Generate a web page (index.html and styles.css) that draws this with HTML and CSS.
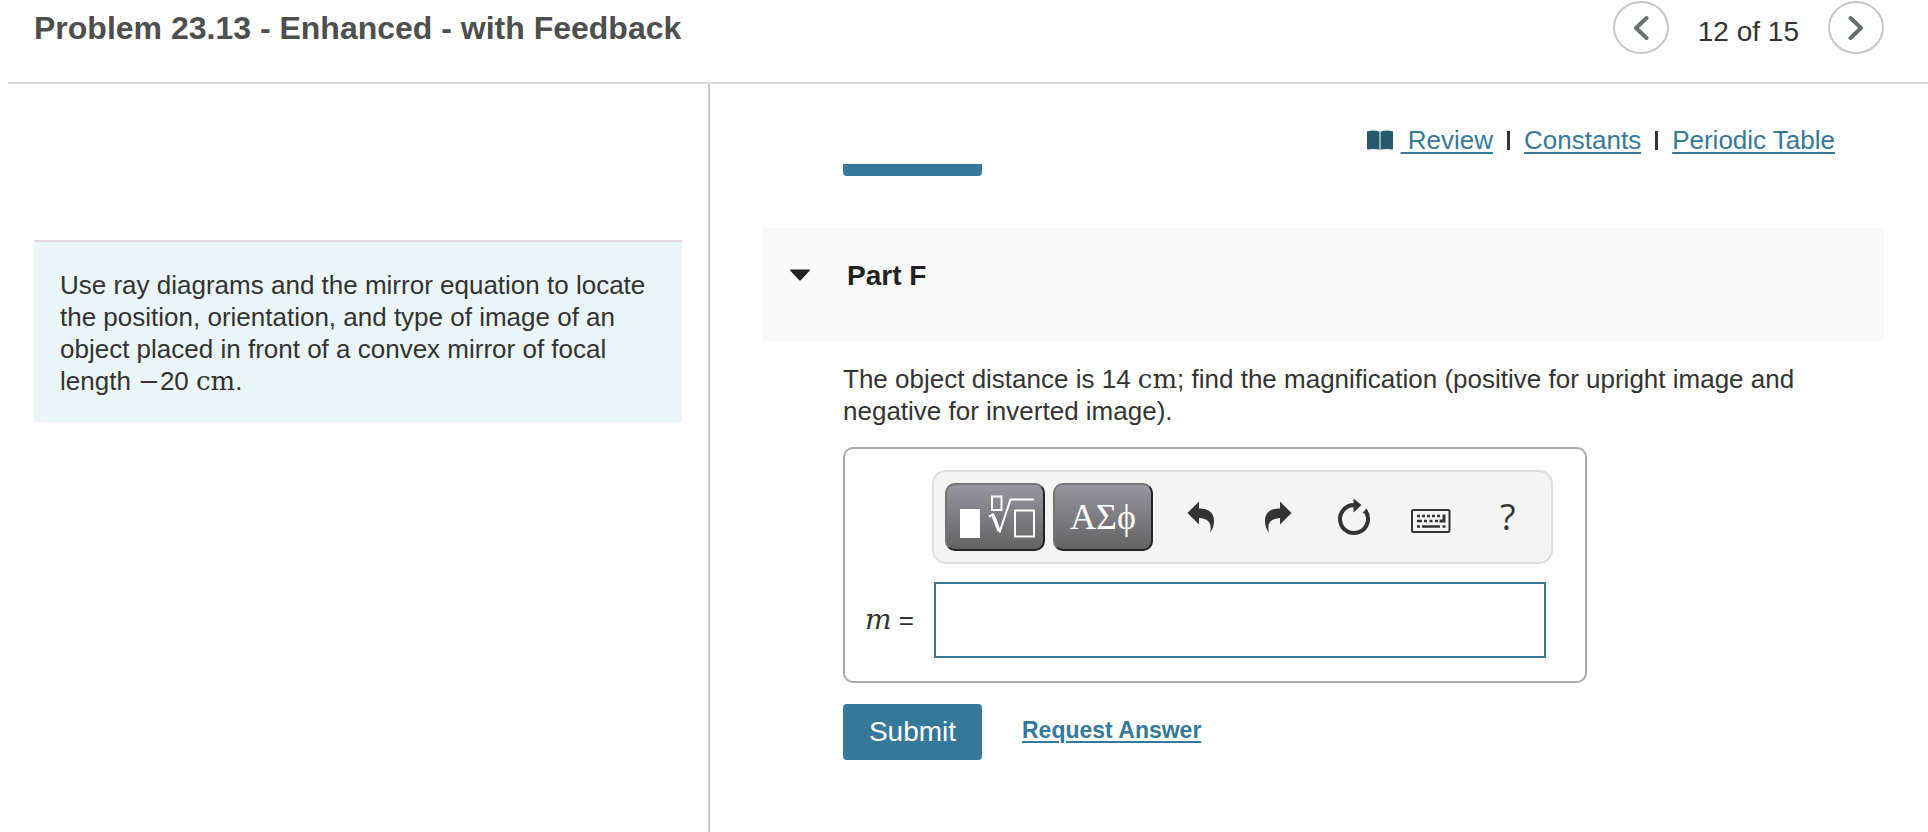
FILE: index.html
```html
<!DOCTYPE html>
<html lang="en">
<head>
<meta charset="utf-8">
<title>Problem 23.13</title>
<link rel="stylesheet" href="styles.css">
</head>
<body>
<header class="topbar">
  <h1 class="title">Problem 23.13 - Enhanced - with Feedback</h1>
  <nav class="pager" aria-label="Problems">
    <button class="round" type="button" aria-label="Previous"><svg width="16" height="26" viewBox="0 0 16 26"><path d="M13.500 3L3 13l10.500 10"/></svg></button>
    <span class="count">12 of 15</span>
    <button class="round" type="button" aria-label="Next"><svg width="16" height="26" viewBox="0 0 16 26"><path d="M2.500 3L13 13L2.500 23"/></svg></button>
  </nav>
</header>
<div class="columns">
  <aside class="side">
    <p class="intro">Use ray diagrams and the mirror equation to locate the position, orientation, and type of image of an object placed in front of a convex mirror of focal length <span class="unit">−</span>20 <span class="unit">cm</span>.</p>
  </aside>
  <main class="main">
    <nav class="links" aria-label="Resources">
      <svg class="book" width="26" height="20" viewBox="0 0 26 20"><path d="M0 1.500Q6 -0.500 12 1.500V19.500Q6 18.500 0 19.500ZM14 1.500Q20 -0.500 26 1.500V19.500Q20 18.500 14 19.500Z" fill="#26596d"/><path d="M13 1.500V20" stroke="#8fb0bd" stroke-width="2"/></svg>
      <a href="#review">&nbsp;Review</a><span class="sep"></span><a href="#constants">Constants</a><span class="sep"></span><a href="#table">Periodic Table</a>
    </nav>
    <div class="prev-submit"></div>
    <section>
      <div class="part">
        <button class="toggle" type="button" aria-label="Collapse Part F"><svg width="22" height="12" viewBox="0 0 22 12"><path d="M1.500 0.500H20.500Q21.500 0.500 20.800 1.500L12 11Q11 12 10 11L1.200 1.500Q0.500 0.500 1.500 0.500Z" fill="#222"/></svg></button>
        <h2 class="part-name">Part F</h2>
      </div>
      <div class="body">
        <p class="question">The object distance is 14 <span class="unit">cm</span>; find the magnification (positive for upright image and negative for inverted image).</p>
        <form class="answer">
          <div class="toolbar">
            <button class="key" type="button" aria-label="Templates"><svg width="76" height="44" viewBox="0 0 76 44" fill="none" stroke="#fff"><path d="M1 14h20v29H1z" fill="#fff" stroke="none"/><path d="M33 1.500h9.500v13.500H33z" stroke-width="2"/><path d="M30 21.500l4-2L41 37" stroke-width="2"/><path d="M34 20l6 16" stroke-width="3.500"/><path d="M40.500 37.500L51.500 4.500H75" stroke-width="2"/><path d="M56 15.500h19v26H56z" stroke-width="2"/></svg></button>
            <button class="key greek" type="button">ΑΣϕ</button>
            <div class="tools">
              <button class="tool" type="button" aria-label="Undo"><svg width="28" height="32" viewBox="0 0 28 32"><path d="M0.500 12L12 0.500V7.500C22 7.500 27 12 27 20C27 25 25.500 28.500 23 31.500C25.500 22 21 17.500 12 17V23.500Z"/></svg></button>
              <button class="tool" type="button" aria-label="Redo"><svg width="28" height="32" viewBox="0 0 28 32"><path d="M27.500 12L16 0.500V7.500C6 7.500 1 12 1 20C1 25 2.500 28.500 5 31.500C2.500 22 7 17.500 16 17V23.500Z"/></svg></button>
              <button class="tool" type="button" aria-label="Reset"><svg width="34" height="38" viewBox="0 0 34 38"><path d="M17 7A14 14 0 1 0 28.500 13" fill="none" stroke="#333" stroke-width="4"/><path d="M16.500 0.500L24.500 7L16.500 14.500Z"/><path d="M25.500 15L29.500 10.500L32 16Z"/></svg></button>
              <button class="tool" type="button" aria-label="Keyboard"><svg class="keyboard" width="40" height="24" viewBox="0 0 40 24" fill="none" stroke="#333"><rect x="1" y="1" width="37.500" height="22" rx="1.500" stroke-width="2"/><path d="M6 7h3M11 7h3M16 7h3M21 7h3M26 7h3M6 12h5M13 12h3M18.500 12h3M24 12h3M6 17.500h3M11 17.500h18M31.500 17.500h3" stroke-width="2.400"/><path d="M33 5.500V12h-4.500" stroke-width="3"/></svg></button>
              <button class="tool help" type="button" aria-label="Help">?</button>
            </div>
          </div>
          <label class="variable" for="m"><i>m</i> =</label>
          <input class="field" id="m" type="text">
        </form>
        <div class="actions">
          <button class="submit" type="button">Submit</button>
          <a class="request" href="#answer">Request Answer</a>
        </div>
      </div>
    </section>
  </main>
</div>
</body>
</html>
```
FILE: styles.css
```css
* { box-sizing: border-box; }
body {
  margin: 0;
  min-height: 100vh;
  display: flex;
  flex-direction: column;
  background: #fff;
  color: #333;
  font: 26px/32px "Liberation Sans", Arial, sans-serif;
}
h1, h2, p { margin: 0; }
button { font: inherit; color: inherit; padding: 0; border: 0; background: none; }
a { color: #36789a; text-decoration-thickness: 2px; text-underline-offset: 3px; }
svg { display: block; }

.topbar {
  display: flex;
  justify-content: space-between;
  align-items: flex-start;
  height: 84px;
  margin-left: 8px;
  padding: 0 44px 0 26px;
  border-bottom: 2px solid #ddd;
}
.title { padding-top: 12px; font-size: 32px; color: #4e4e4e; white-space: nowrap; }
.pager { display: flex; align-items: center; gap: 29px; }
.round {
  display: grid;
  place-items: center;
  width: 56px;
  height: 53px;
  margin-top: 1px;
  border: 2px solid #c6c6c6;
  border-radius: 50%;
}
.round path { fill: none; stroke: #6a6e6e; stroke-width: 4; stroke-linecap: round; stroke-linejoin: round; }
.count { padding-top: 10px; font-size: 28px; }

.columns { flex: 1; display: flex; }
.side { flex: 0 0 37%; max-width: 710px; padding: 156px 26px 0 34px; border-right: 2px solid #bbcbdc; }
.intro { padding: 27px 26px 25px; border-top: 2px solid #ddd; background: #e9f5f6; }
.unit { font-family: "DejaVu Serif", serif; line-height: 24px; }

.main { flex: 1; padding: 40px 44px 40px 52px; }
.links { display: flex; align-items: center; justify-content: flex-end; padding-right: 49px; }
.book { margin-right: 8px; }
.sep { width: 3px; height: 19px; margin: 0 14px; background: #333; }
.prev-submit { width: 139px; height: 12px; margin: 8px 0 52px 81px; border-radius: 0 0 4px 4px; background: #36789a; }
.part { display: flex; height: 113px; padding: 32px 27px; gap: 36px; background: #f9f9f9; }
.toggle { width: 22px; height: 30px; }
.part-name { font-size: 28px; color: #222; }
.body { padding: 22px 40px 0 81px; }

.answer {
  display: grid;
  grid-template-columns: 67px 1fr;
  align-items: center;
  row-gap: 18px;
  max-width: 744px;
  margin-top: 20px;
  padding: 21px 32px 23px 20px;
  border: 2px solid #a9a9a9;
  border-radius: 10px;
}
.toolbar {
  grid-column: 2;
  display: flex;
  align-items: center;
  gap: 8px;
  height: 94px;
  padding: 0 5px 0 11px;
  border: 2px solid #ddd;
  border-radius: 14px;
  background: #f4f4f4;
}
.key {
  display: grid;
  place-items: center;
  width: 100px;
  height: 68px;
  border: 2px solid;
  border-color: #737373 #222 #222 #737373;
  border-radius: 10px;
  background: linear-gradient(#98969f, #636363);
  color: #fff;
}
.key svg { margin-left: 4px; }
.greek { font: 36px/40px "Liberation Serif", serif; }
.tools { flex: 1; display: grid; grid-template-columns: repeat(5, 1fr); margin-left: 2px; }
.tool { display: grid; place-items: center; height: 60px; fill: #333; }
.keyboard { margin-top: 8px; }
.help { font: 36px/40px "Open Sans", sans-serif; }
.variable { white-space: nowrap; }
.variable i { font-family: "DejaVu Serif", serif; font-size: 28px; }
.field {
  width: auto;
  height: 76px;
  margin: 0 7px 0 2px;
  padding: 0 12px;
  border: 2px solid #36789a;
  background: #fff;
  font: inherit;
  outline: 0;
}
.actions { display: flex; align-items: center; gap: 40px; margin-top: 21px; }
.submit { width: 139px; height: 56px; border-radius: 4px; background: #36789a; color: #fff; font-size: 28px; }
.request { padding-bottom: 4px; font-size: 23px; font-weight: bold; }
```
